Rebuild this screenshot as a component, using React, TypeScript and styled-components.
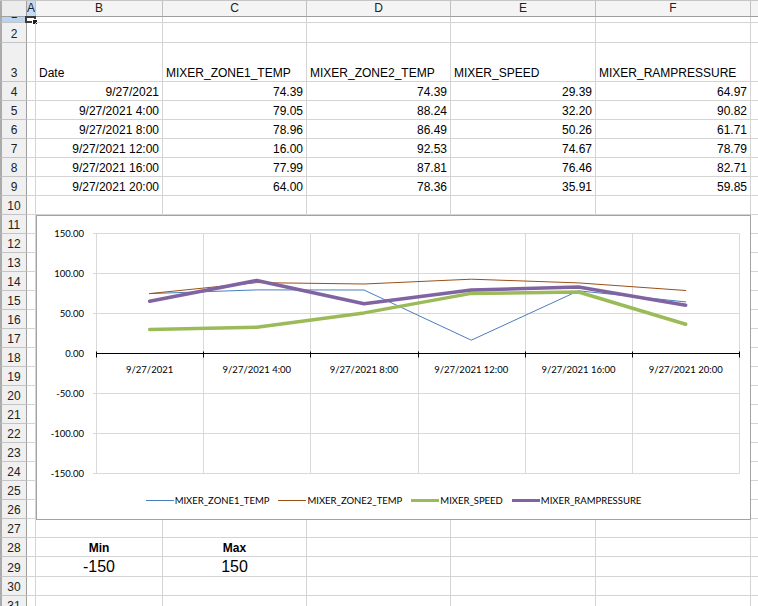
import React from 'react';
import styled, { createGlobalStyle } from 'styled-components';

const GlobalStyle = createGlobalStyle`
  html, body { margin: 0; padding: 0; background: #ffffff; }
  body { font-family: "Liberation Sans", Arial, sans-serif; }
`;

type Align = 'left' | 'right' | 'center';
type Variant = 'plain' | 'bold' | 'big';

interface CellSpec {
  text: string;
  align: Align;
  variant?: Variant;
}

const COLUMNS = [
  { key: 'A', width: 9 },
  { key: 'B', width: 127 },
  { key: 'C', width: 144 },
  { key: 'D', width: 144 },
  { key: 'E', width: 145 },
  { key: 'F', width: 155 },
  { key: 'G', width: 60 },
];

const ROW_HEIGHTS: Record<number, number> = { 1: 6, 2: 20, 3: 39, 29: 20 };
const rowHeight = (n: number) => ROW_HEIGHTS[n] ?? 19;
const ROW_COUNT = 31;

const HEADERS = ['MIXER_ZONE1_TEMP', 'MIXER_ZONE2_TEMP', 'MIXER_SPEED', 'MIXER_RAMPRESSURE'];

const DATA: { date: string; values: number[] }[] = [
  { date: '9/27/2021', values: [74.39, 74.39, 29.39, 64.97] },
  { date: '9/27/2021 4:00', values: [79.05, 88.24, 32.2, 90.82] },
  { date: '9/27/2021 8:00', values: [78.96, 86.49, 50.26, 61.71] },
  { date: '9/27/2021 12:00', values: [16.0, 92.53, 74.67, 78.79] },
  { date: '9/27/2021 16:00', values: [77.99, 87.81, 76.46, 82.71] },
  { date: '9/27/2021 20:00', values: [64.0, 78.36, 35.91, 59.85] },
];

const SERIES = [
  { name: 'MIXER_ZONE1_TEMP', color: '#4a7ebb', width: 1 },
  { name: 'MIXER_ZONE2_TEMP', color: '#9a4f17', width: 1 },
  { name: 'MIXER_SPEED', color: '#9bbb59', width: 3.5 },
  { name: 'MIXER_RAMPRESSURE', color: '#8064a2', width: 3.5 },
];

function cellAt(row: number, col: string): CellSpec | null {
  const dataCols = ['C', 'D', 'E', 'F'];
  if (row === 3) {
    if (col === 'B') return { text: 'Date', align: 'left' };
    const i = dataCols.indexOf(col);
    if (i >= 0) return { text: HEADERS[i], align: 'left' };
  }
  if (row >= 4 && row <= 9) {
    const rec = DATA[row - 4];
    if (col === 'B') return { text: rec.date, align: 'right' };
    const i = dataCols.indexOf(col);
    if (i >= 0) return { text: rec.values[i].toFixed(2), align: 'right' };
  }
  if (row === 28) {
    if (col === 'B') return { text: 'Min', align: 'center', variant: 'bold' };
    if (col === 'C') return { text: 'Max', align: 'center', variant: 'bold' };
  }
  if (row === 29) {
    if (col === 'B') return { text: '-150', align: 'center', variant: 'big' };
    if (col === 'C') return { text: '150', align: 'center', variant: 'big' };
  }
  return null;
}

/* ---------- sheet grid ---------- */

const Sheet = styled.div`
  position: relative;
  width: 758px;
  height: 606px;
  overflow: hidden;
  background: #ffffff;
  font-family: "Liberation Sans", Arial, sans-serif;
  font-size: 12px;
  color: #000000;
`;

const Row = styled.div<{ $h: number }>`
  display: flex;
  height: ${(p) => p.$h}px;
`;

const HeaderRow = styled.div`
  display: flex;
  height: 17px;
  box-sizing: border-box;
  border-top: 1px solid #c6c6c6;
  border-bottom: 1px solid #9f9f9f;
  background: #f4f4f4;
`;

const Corner = styled.div`
  flex: 0 0 27px;
  box-sizing: border-box;
  border-left: 2px solid #ababab;
  border-right: 1px solid #9f9f9f;
  background: #ececec;
`;

const ColHead = styled.div<{ $w: number; $selected?: boolean }>`
  flex: 0 0 ${(p) => p.$w}px;
  box-sizing: border-box;
  display: flex;
  align-items: center;
  justify-content: center;
  border-right: 1px solid #c0c0c0;
  background: ${(p) => (p.$selected ? '#c6dcf2' : 'transparent')};
  font-size: 12px;
  line-height: 15px;
  color: #222;
  overflow: hidden;
`;

const RowHead = styled.div<{ $selected?: boolean }>`
  flex: 0 0 27px;
  box-sizing: border-box;
  display: flex;
  align-items: flex-end;
  justify-content: center;
  border-left: 2px solid #ababab;
  border-right: 1px solid #9f9f9f;
  border-bottom: 1px solid #c4c4c4;
  background: ${(p) => (p.$selected ? '#b9d4f0' : '#f0f0f0')};
  font-size: 12px;
  line-height: 16px;
  color: #222;
  overflow: hidden;
`;

const Cell = styled.div<{ $w: number; $align: Align; $variant: Variant }>`
  position: relative;
  flex: 0 0 ${(p) => p.$w}px;
  box-sizing: border-box;
  display: flex;
  align-items: flex-end;
  justify-content: ${(p) =>
    p.$align === 'right' ? 'flex-end' : p.$align === 'center' ? 'center' : 'flex-start'};
  padding: 0 3px;
  border-right: 1px solid #d4d4d4;
  border-bottom: 1px solid #d4d4d4;
  white-space: nowrap;
  font-size: ${(p) => (p.$variant === 'big' ? 16 : 12)}px;
  font-weight: ${(p) => (p.$variant === 'bold' ? 700 : 400)};
  line-height: ${(p) => (p.$variant === 'big' ? 19 : 16)}px;
`;

/* active cell outline with its fill handle */
const ActiveOutline = styled.div`
  position: absolute;
  left: -2px;
  top: -1px;
  right: -1px;
  bottom: -1px;
  border: 2px solid #3a3a3a;
  pointer-events: none;
`;

const FillHandle = styled.div`
  position: absolute;
  right: -4px;
  bottom: -4px;
  width: 4px;
  height: 4px;
  background: #1e1e1e;
  border: 1px solid #ffffff;
`;

/* ---------- embedded chart ---------- */

const ChartFrame = styled.div`
  position: absolute;
  left: 36px;
  top: 215px;
  width: 715px;
  height: 305px;
  box-sizing: border-box;
  border: 1px solid #a3a3a3;
  background: #ffffff;
  display: flex;
  flex-direction: column;
`;

const PlotSvg = styled.svg`
  display: block;
  flex: 0 0 auto;
`;

const AxisText = styled.text`
  font-family: Lato, "Liberation Sans", sans-serif;
  font-size: 9.5px;
  fill: #000000;
`;

const Legend = styled.div`
  display: flex;
  justify-content: center;
  align-items: center;
  gap: 9px;
  height: 33px;
  font-family: Lato, "Liberation Sans", sans-serif;
  font-size: 9.5px;
  color: #000000;
`;

const LegendItem = styled.div`
  display: flex;
  align-items: center;
  gap: 1px;
`;

const LegendSwatch = styled.span<{ $color: string; $thick: number }>`
  display: block;
  width: 28px;
  height: ${(p) => p.$thick}px;
  background: ${(p) => p.$color};
`;

const PLOT_LEFT = 59;
const PLOT_RIGHT = 702.3;
const ZERO_Y = 137;
const Y_SCALE = 0.798;
const CAT_W = (PLOT_RIGHT - PLOT_LEFT) / DATA.length;

const yOf = (v: number) => ZERO_Y - v * Y_SCALE;
const xOf = (i: number) => PLOT_LEFT + (i + 0.5) * CAT_W;
const crisp = (n: number) => Math.round(n) + 0.5;

function Chart() {
  const ticks = [150, 100, 50, 0, -50, -100, -150];
  const top = crisp(yOf(150));
  const bottom = crisp(yOf(-150));
  const bounds = Array.from({ length: DATA.length + 1 }, (_, i) => crisp(PLOT_LEFT + i * CAT_W));

  return (
    <ChartFrame>
      <PlotSvg width={713} height={268} viewBox="0 0 713 268">
        {ticks
          .filter((t) => t !== 0)
          .map((t) => (
            <line
              key={`h${t}`}
              x1={PLOT_LEFT - 3}
              x2={bounds[bounds.length - 1]}
              y1={crisp(yOf(t))}
              y2={crisp(yOf(t))}
              stroke="#d9d9d9"
              strokeWidth={1}
            />
          ))}
        {bounds.map((x, i) => (
          <line key={`v${i}`} x1={x} x2={x} y1={top} y2={bottom} stroke="#d9d9d9" strokeWidth={1} />
        ))}
        <line x1={bounds[0]} x2={bounds[bounds.length - 1]} y1={crisp(ZERO_Y)} y2={crisp(ZERO_Y)} stroke="#000" strokeWidth={1} />
        {bounds.map((x, i) => (
          <line key={`t${i}`} x1={x} x2={x} y1={crisp(ZERO_Y) - 2} y2={crisp(ZERO_Y) + 4} stroke="#000" strokeWidth={1} />
        ))}
        {ticks.map((t) => (
          <AxisText key={`l${t}`} x={47} y={crisp(yOf(t)) + 3.5} textAnchor="end">
            {t.toFixed(2)}
          </AxisText>
        ))}
        {DATA.map((d, i) => (
          <AxisText key={`c${i}`} x={xOf(i)} y={156.5} textAnchor="middle">
            {d.date}
          </AxisText>
        ))}
        {SERIES.map((s, si) => (
          <polyline
            key={s.name}
            fill="none"
            stroke={s.color}
            strokeWidth={s.width}
            strokeLinejoin="round"
            strokeLinecap="round"
            points={DATA.map((d, i) => `${xOf(i).toFixed(1)},${yOf(d.values[si]).toFixed(1)}`).join(' ')}
          />
        ))}
      </PlotSvg>
      <Legend>
        {SERIES.map((s) => (
          <LegendItem key={s.name}>
            <LegendSwatch $color={s.color} $thick={s.width > 2 ? 3 : 1} />
            <span>{s.name}</span>
          </LegendItem>
        ))}
      </Legend>
    </ChartFrame>
  );
}

export default function App() {
  const rows = Array.from({ length: ROW_COUNT }, (_, i) => i + 1);
  return (
    <>
      <GlobalStyle />
      <Sheet>
        <HeaderRow>
          <Corner />
          {COLUMNS.map((c) => (
            <ColHead key={c.key} $w={c.width} $selected={c.key === 'A'}>
              {c.key}
            </ColHead>
          ))}
        </HeaderRow>
        {rows.map((r) => (
          <Row key={r} $h={rowHeight(r)}>
            <RowHead $selected={r === 1}>{r}</RowHead>
            {COLUMNS.map((c) => {
              const spec = cellAt(r, c.key);
              return (
                <Cell
                  key={c.key}
                  $w={c.width}
                  $align={spec?.align ?? 'left'}
                  $variant={spec?.variant ?? 'plain'}
                >
                  {spec?.text}
                  {r === 1 && c.key === 'A' && (
                    <ActiveOutline>
                      <FillHandle />
                    </ActiveOutline>
                  )}
                </Cell>
              );
            })}
          </Row>
        ))}
        <Chart />
      </Sheet>
    </>
  );
}
